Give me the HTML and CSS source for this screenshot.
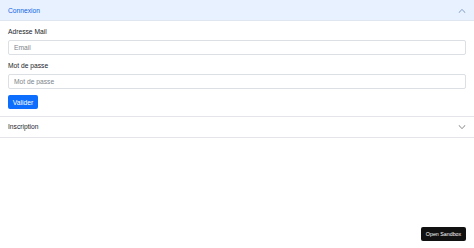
FILE: index.html
```html
<!DOCTYPE html>
<html>
<head>
    <link rel="stylesheet" href="styles.css">
</head>
<body>
    <div class="accordion">
        <div class="accordion-item">
            <div class="accordion-header active">
                <span>Connexion</span>
                <svg class="chevron up" viewBox="0 0 16 16"><path d="M1.646 4.646a.5.5 0 0 1 .708 0L8 10.293l5.646-5.647a.5.5 0 0 1 .708.708l-6 6a.5.5 0 0 1-.708 0l-6-6a.5.5 0 0 1 0-.708z"/></svg>
            </div>
            <div class="accordion-body">
                <div class="form-group">
                    <label>Adresse Mail</label>
                    <input type="text" placeholder="Email">
                </div>
                <div class="form-group">
                    <label>Mot de passe</label>
                    <input type="password" placeholder="Mot de passe">
                </div>
                <button class="btn">Valider</button>
            </div>
        </div>
        <div class="accordion-item">
            <div class="accordion-header">
                <span>Inscription</span>
                <svg class="chevron" viewBox="0 0 16 16"><path d="M1.646 4.646a.5.5 0 0 1 .708 0L8 10.293l5.646-5.647a.5.5 0 0 1 .708.708l-6 6a.5.5 0 0 1-.708 0l-6-6a.5.5 0 0 1 0-.708z"/></svg>
            </div>
        </div>
    </div>
    <div class="sandbox">Open Sandbox</div>
</body>
</html>
```
FILE: styles.css
```css
body {
    margin: 0;
    font-family: "Liberation Sans", Arial, sans-serif;
    font-size: 6.7px;
    color: #212529;
    background-color: #fff;
}
.accordion-item {
    border-bottom: 1px solid #e3e5e8;
}
.accordion-header {
    display: flex;
    justify-content: space-between;
    align-items: center;
    height: 20px;
    padding: 0 8px;
    box-sizing: border-box;
}
.accordion-header.active {
    height: 21px;
    background-color: #e7f1ff;
    color: #0c63e4;
    box-shadow: inset 0 -1px 0 #dfe6f0;
}
.chevron {
    width: 8px;
    height: 8px;
    fill: #555;
}
.chevron.up {
    transform: rotate(180deg);
    fill: #5a7cb0;
}
.accordion-body {
    padding: 6px 8px 6.5px;
}
.form-group {
    margin-bottom: 6.5px;
}
label {
    display: block;
    line-height: 9px;
    margin-bottom: 3.5px;
}
input {
    display: block;
    width: 100%;
    height: 15px;
    box-sizing: border-box;
    padding: 0 5px;
    border: 1px solid #dcdfe3;
    border-radius: 2px;
    font-family: inherit;
    font-size: 6.7px;
}
input::placeholder {
    color: #7d848b;
}
.btn {
    width: 30px;
    height: 14px;
    padding: 0;
    background-color: #0d6efd;
    color: #fff;
    border: none;
    border-radius: 2px;
    font-family: inherit;
    font-size: 6.7px;
}
.sandbox {
    position: fixed;
    right: 8px;
    bottom: 7px;
    width: 45px;
    height: 14px;
    line-height: 14px;
    text-align: center;
    background-color: #111;
    color: #fff;
    font-size: 5.3px;
    border-radius: 2px;
}
```
